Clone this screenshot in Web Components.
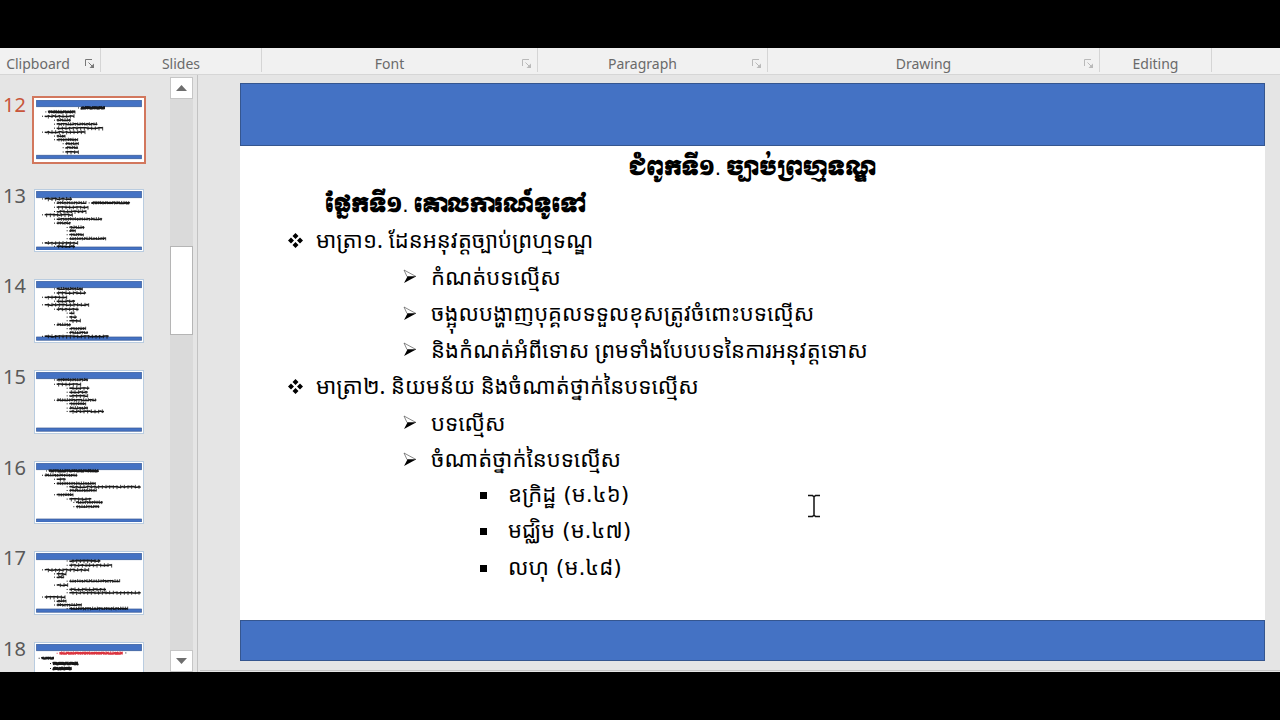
<!DOCTYPE html>
<html lang="km">
<head>
<meta charset="utf-8">
<title>Slide editor</title>
<style>
html,body{margin:0;height:100%;background:#000}
body{font-family:"Open Sans","Noto Sans",sans-serif;overflow:hidden}
</style>
</head>
<body>
<slide-editor></slide-editor>
<script>
const define = (name, html, after) => {
  const t = document.createElement('template');
  t.innerHTML = html;
  customElements.define(name, class extends HTMLElement {
    constructor() {
      super();
      this.attachShadow({ mode: 'open' }).append(t.content.cloneNode(true));
    }
    connectedCallback() { if (after) after(this, this.shadowRoot); }
  });
};

define('ribbon-group', `
<style>
:host{display:block;position:relative;height:24px;box-sizing:border-box;border-right:1px solid #d5d5d5;text-align:center;color:#6a6a6a;font:14px/31px "Noto Sans","Open Sans",sans-serif}
:host([launcher]){padding-right:20px}
:host([launcher="active"]){padding-right:24px}
button{position:absolute;right:4px;top:10px;width:12px;height:12px;padding:0;border:0;background:none;color:#b9b9b9;display:none}
:host([launcher]) button{display:block}
:host([launcher="active"]) button{color:#777}
svg{display:block}
</style>
<slot></slot>
<button aria-label="Open dialog"><svg width="12" height="12" viewBox="0 0 12 12" fill="none" stroke="currentColor"><path d="M1.500 8V1.500H8M4.500 4.500L8.500 8.500"/><path d="M10 5.500V10H5.500z" fill="currentColor" stroke="none"/></svg></button>`);

define('ribbon-bar', `
<style>
:host{display:grid;grid-template-columns:101fr 161fr 276fr 230fr 332fr 112fr 68fr;height:26px;background:#f1f1f1;border-bottom:1px solid #d6d6d6;overflow:hidden}
</style>
<ribbon-group launcher="active">Clipboard</ribbon-group><ribbon-group>Slides</ribbon-group><ribbon-group launcher>Font</ribbon-group><ribbon-group launcher>Paragraph</ribbon-group><ribbon-group launcher>Drawing</ribbon-group><ribbon-group>Editing</ribbon-group>`);

/* Preview lines of each slide: [x, y, width, weight, colour] on a 318 x 180 sheet. */
const previews = {
12:[[126,24,80,8],[28,36,86,7],[18,49,96],[54,61,48],[54,73,128],[54,85,144],[18,97,128],[54,109,32],[54,120,68],[80,132,46],[80,144,46],[80,157,46]],
13:[[18,24,90],[54,36,94],[158,36,122,6],[54,49,102],[54,62,94],[18,72,88],[54,85,142],[54,97,48],[92,110,52],[92,120,26],[92,132,50],[92,144,116],[18,157,102],[54,167,60]],
14:[[54,24,84],[54,36,96],[18,49,72],[54,61,62],[18,72,138],[54,85,72],[92,97,22],[92,109,26],[92,120,38],[54,132,50],[92,144,54],[92,156,64],[18,167,198]],
15:[[54,24,100],[54,37,80],[92,49,64],[92,61,62],[92,72,58],[54,85,126],[92,96,54],[92,109,64],[92,119,110]],
16:[[30,24,156,7],[18,37,106],[54,49,32],[54,62,124],[92,72,218],[92,83,86],[54,96,54],[92,109,74],[112,119,88],[112,132,78]],
17:[[92,24,98,5],[92,37,132],[18,51,136],[54,63,34],[54,73,28],[92,85,158],[54,97,36],[92,110,114],[92,120,218],[18,133,64],[54,145,34],[54,157,80],[92,168,180]],
18:[[62,28,196,7,'#d8202c'],[268,27,6,6],[8,43,46,7],[42,59,84,9],[42,74,64,9]]
};
const squiggle = ([x, y, w, weight = 4.5, color = '#000'], i) => {
  let main = `M${x + 8} ${y}`, marks = '', px = x + 8, k = i * 7 + w;
  while (px < x + w) {
    const step = 3 + (k * 5 % 4);
    px += step;
    main += `L${px} ${y + (k % 3) - 1}`;
    if (k % 2) marks += `M${px} ${y - 4 - (k % 3)}v${8 + k % 4}`;
    k = k * 3 + 1 & 255;
  }
  return `<g fill="none" stroke="${color}" opacity=".9"><path d="M${x} ${y}h3" stroke-width="3"/><path d="${main}" stroke-width="${weight}"/><path d="${marks}" stroke-width="2.5"/></g>`;
};

define('slide-thumb', `
<style>
:host{display:grid;grid-template-columns:34px 110px;align-items:start;color:#595959}
.n{font:20px/24px "Noto Sans","Open Sans",sans-serif;margin-top:-5px;padding-left:3px}
.frame{border:1px solid #b9cce0;padding:1px;background:#fff}
svg{display:block;width:100%;aspect-ratio:16/9}
:host([selected]){color:#c8553a}
:host([selected]) .frame{border-color:#fff;outline:2px solid #d2775d}
</style>
<span class="n"></span><div class="frame"></div>`, (el, root) => {
  const n = el.getAttribute('number');
  root.querySelector('.n').textContent = n;
  const foot = n === '12' ? 167 : 169;
  root.querySelector('.frame').innerHTML =
    `<svg viewBox="0 0 318 180" preserveAspectRatio="none" aria-hidden="true"><path fill="#fff" d="M0 0h318v180H0z"/><path fill="#4472c4" stroke="#34558f" stroke-width="2" d="M1 1h316v19H1zM1 ${foot}h316v10H1z"/>${previews[n].map(squiggle).join('')}</svg>`;
});

define('scroll-rail', `
<style>
:host{display:flex;flex-direction:column;background:#dadada}
button{box-sizing:border-box;width:100%;height:22px;border:1px solid #c6c6c6;background:#fff;padding:0;display:grid;place-items:center}
.space{flex:148 1 0}
.space.low{flex:316 1 0}
.thumb{box-sizing:border-box;flex:87 1 0;background:#fff;border:1px solid #b5b5b5}
</style>
<button aria-label="Scroll up"><svg width="11" height="6"><path fill="#6e6e6e" d="M0 6L5.500 0 11 6z"/></svg></button>
<div class="space"></div><div class="thumb"></div><div class="space low"></div>
<button aria-label="Scroll down"><svg width="11" height="6"><path fill="#6e6e6e" d="M0 0H11L5.500 6z"/></svg></button>`);

define('slide-panel', `
<style>
:host{display:grid;grid-template-columns:170px 23px;width:198px;box-sizing:border-box;border-right:1px solid #c3c3c3;min-height:0;overflow:hidden}
nav{display:flex;flex-direction:column;gap:27px;padding-top:23px;min-height:0;overflow:hidden}
slide-thumb{flex:none}
scroll-rail{margin-top:2px}
</style>
<nav aria-label="Slides">${[12,13,14,15,16,17,18].map(n => `<slide-thumb number="${n}"${n === 12 ? ' selected' : ''}></slide-thumb>`).join('')}</nav>
<scroll-rail></scroll-rail>`);

define('outline-line', `
<style>
:host{display:flex;align-items:center;min-height:0;white-space:nowrap;padding-left:48px}
.mark{width:28px;flex:none;display:flex;margin-top:2px}
:host([level="2"]){padding-left:163px}
:host([level="3"]){padding-left:240px;font-family:"DejaVu Sans","Khmer OS Siemreap","Noto Sans Khmer","Khmer OS",sans-serif}
</style>
<span class="mark"></span><slot></slot>`, (el, root) => {
  root.querySelector('.mark').innerHTML = {
    1: '<svg width="15" height="15" viewBox="0 0 15 15"><path d="M7.500 0L10.500 3 7.500 6 4.500 3zM3 4.500L6 7.500 3 10.500 0 7.500zM12 4.500L15 7.500 12 10.500 9 7.500zM7.500 9L10.500 12 7.500 15 4.500 12z"/></svg>',
    2: '<svg width="14" height="15" viewBox="0 0 14 15"><path d="M1 1L13 7.500 4 7.500z" fill="#fff" stroke="#555" stroke-width=".7"/><path d="M13 7.500L1 14 4.500 7.500z"/></svg>',
    3: '<svg width="8" height="8"><path d="M0 0h7v7H0z"/></svg>'
  }[el.getAttribute('level')];
});

define('slide-sheet', `
<style>
:host{display:flex;flex-direction:column;position:relative;background:#fff;color:#000;box-sizing:border-box;font:22px/36px "Khmer OS Siemreap","Noto Sans Khmer","Khmer OS","Open Sans",sans-serif}
.band{box-sizing:border-box;background:#4472c4;border:1px solid #35568f;flex:none}
.top{height:63px}.bottom{height:41px}
.text{flex:1;min-height:0;display:grid;grid-template-rows:repeat(12,minmax(0,1fr));padding:2px 0 34px}
h1,h2{box-sizing:border-box;margin:0;padding-top:6px;min-height:0;display:flex;align-items:center;font-family:"Khmer OS Muol Light",Moul,"Noto Serif Khmer","Noto Sans Khmer","Open Sans",sans-serif;font-size:20px;line-height:28px;font-weight:700;white-space:nowrap}
h1{justify-content:center}
h2{padding-left:85px}
i{font:20px "DejaVu Sans",sans-serif}
.caret{position:absolute;left:567px;top:411px}
</style>
<div class="band top"></div>
<div class="text">
<h1><span>ជំពូកទី១<i>.</i> ច្បាប់ព្រហ្មទណ្ឌ</span></h1>
<h2><span>ផ្នែកទី១<i>.</i> គោលការណ៍ទូទៅ</span></h2>
<outline-line level="1">មាត្រា១. ដែនអនុវត្តច្បាប់ព្រហ្មទណ្ឌ</outline-line>
<outline-line level="2">កំណត់បទល្មើស</outline-line>
<outline-line level="2">ចង្អុលបង្ហាញបុគ្គលទទួលខុសត្រូវចំពោះបទល្មើស</outline-line>
<outline-line level="2">និងកំណត់អំពីទោស ព្រមទាំងបែបបទនៃការអនុវត្តទោស</outline-line>
<outline-line level="1">មាត្រា២. និយមន័យ និងចំណាត់ថ្នាក់នៃបទល្មើស</outline-line>
<outline-line level="2">បទល្មើស</outline-line>
<outline-line level="2">ចំណាត់ថ្នាក់នៃបទល្មើស</outline-line>
<outline-line level="3">ឧក្រិដ្ឋ (ម.៤៦)</outline-line>
<outline-line level="3">មជ្ឈិម (ម.៤៧)</outline-line>
<outline-line level="3">លហុ (ម.៤៨)</outline-line>
</div>
<div class="band bottom"></div>
<svg class="caret" width="14" height="24" viewBox="0 0 14 24" fill="none" stroke="#111" stroke-width="1.500"><path d="M1 1.500h4.500L7 3l1.500-1.500H13M7 3v18M1 22.500h4.500L7 21l1.500 1.500H13"/></svg>`);

define('slide-editor', `
<style>
:host{display:flex;flex-direction:column;height:100vh;box-sizing:border-box;padding:48px 0;background:#000}
main{flex:1;min-height:0;display:grid;grid-template-columns:auto 1fr;grid-template-rows:minmax(0,1fr);background:#e5e5e5}
.stage{display:grid;margin-left:2px;margin-bottom:1px;padding:8px 15px 9px 40px;border-bottom:1px solid #c3c3c3}
</style>
<ribbon-bar></ribbon-bar>
<main><slide-panel></slide-panel><div class="stage"><slide-sheet></slide-sheet></div></main>`);
</script>
</body>
</html>
